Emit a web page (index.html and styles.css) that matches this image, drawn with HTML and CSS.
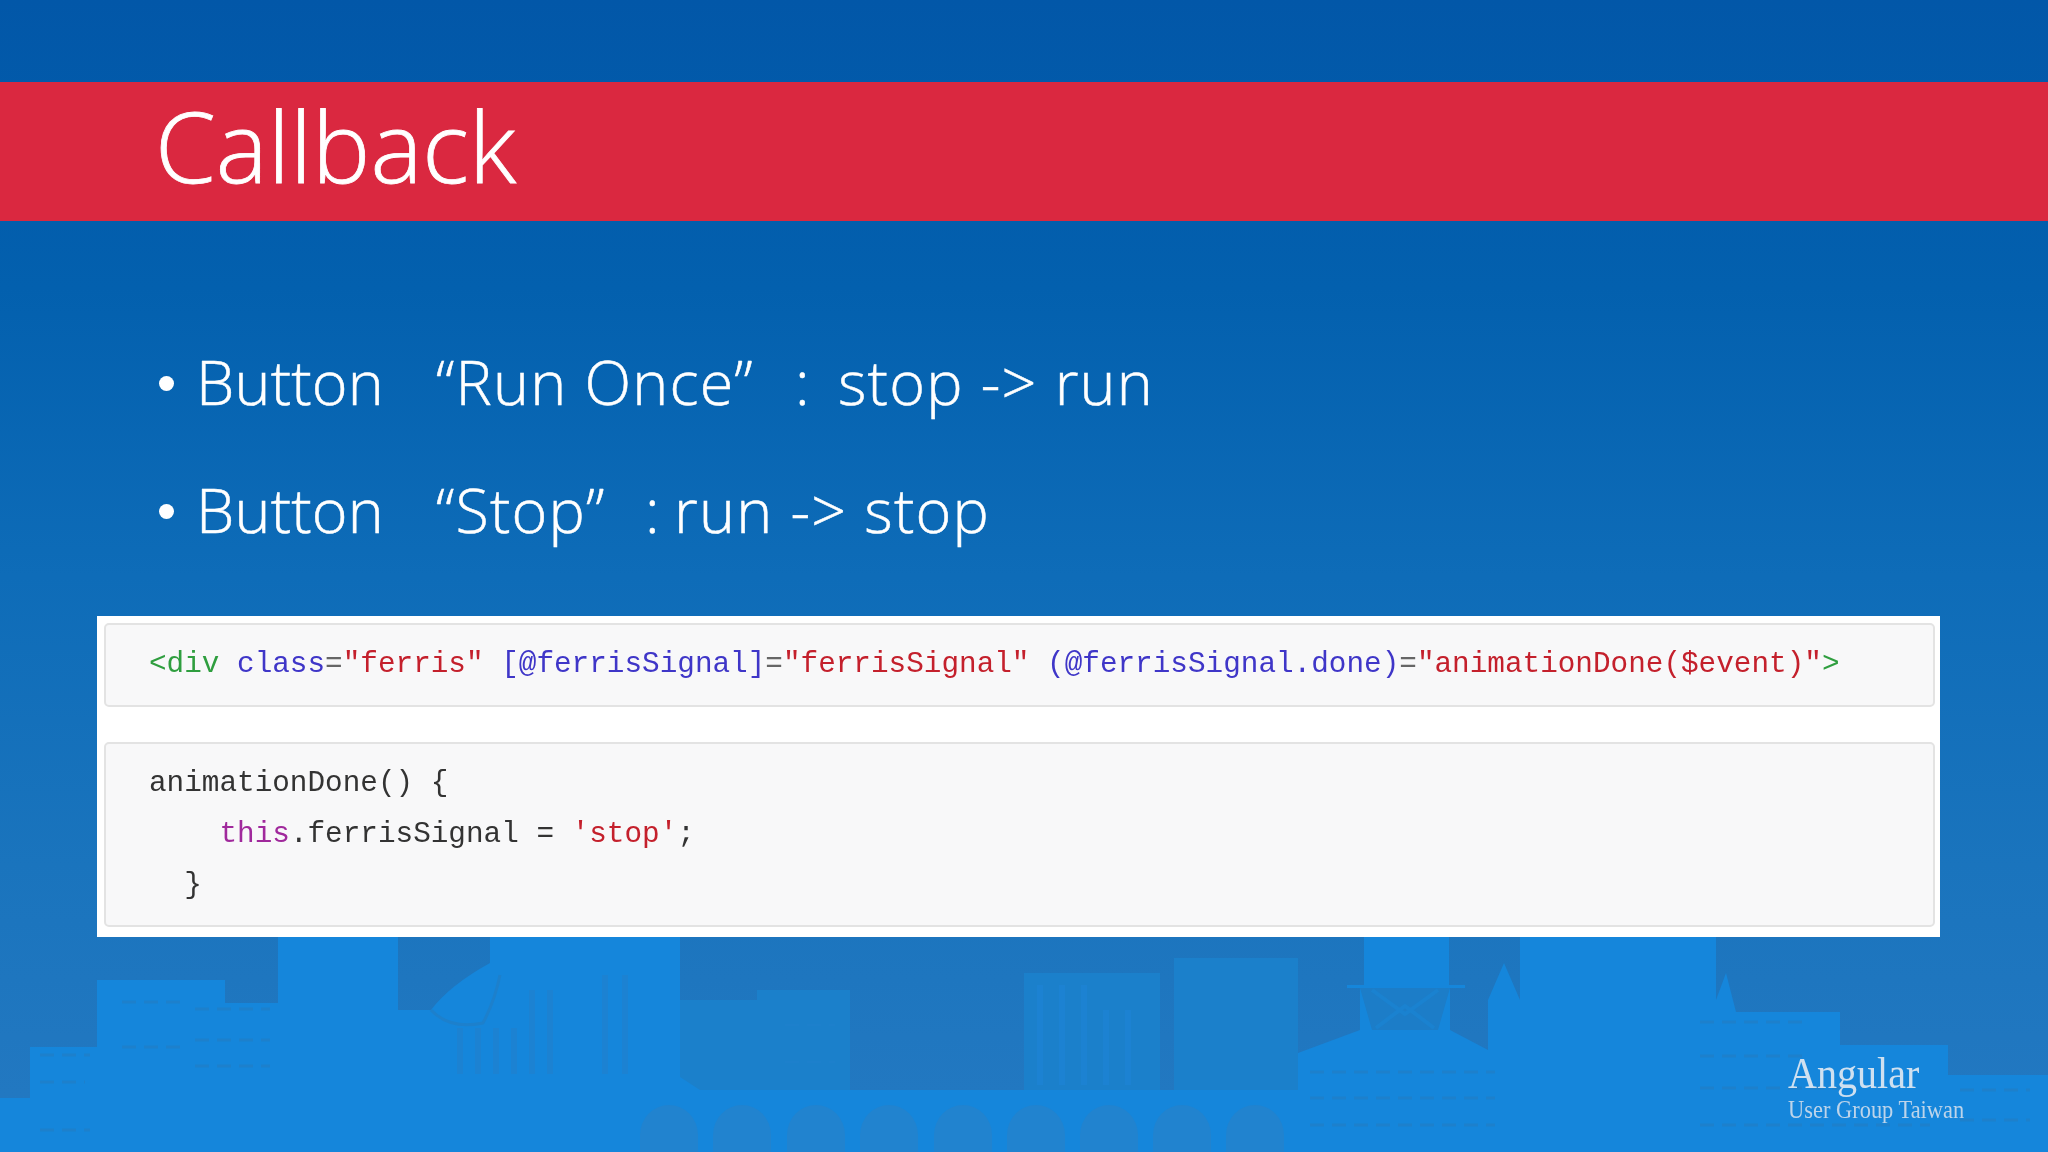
FILE: index.html
```html
<!DOCTYPE html>
<html lang="en">
<head>
<meta charset="utf-8">
<title>Callback</title>
<link rel="stylesheet" href="styles.css">
</head>
<body>
<main class="slide">
  <svg class="skyline" viewBox="0 0 2048 1152" aria-hidden="true">
    <path class="sky-soft" d="M680 1000H757V990H850V1090H680ZM1024 973H1160V1090H1024ZM1174 958H1298V1090H1174Z"/>
    <path class="sky-main" d="M0 1152V1098H30V1047H97V980H225V1003H278V937H398V1010H431Q450 985 490 963V937H680V1077L700 1090H1298V1053L1360 1030V988H1347V985H1364V937H1449V985H1465V988H1450V1030L1488 1050V1000L1504 963 1520 1000V937H1716V1000L1726 973 1736 1012H1840V1045H1948V1075H2048V1152Z"/>
    <path class="sky-roof" d="M1360 988H1450L1438 1030H1372Z"/>
    <path class="sky-cross" d="M1372 990L1405 1014 1438 990M1376 1028L1405 1006 1434 1028"/>
    <path class="sky-dome" d="M431 1010Q450 1030 483 1023Q495 1000 500 975"/>
    <path class="sky-columns" d="M460 1028V1074M478 1028V1074M496 1028V1074M514 1028V1074M532 990V1074M550 990V1074M605 975V1074M625 975V1074M1040 985V1085M1062 985V1085M1084 985V1085M1106 1010V1085M1128 1010V1085"/>
    <g class="sky-arches">
      <path d="M640 1152V1135a29 30 0 0 1 58 0V1152Z"/>
      <path d="M713 1152V1135a29 30 0 0 1 58 0V1152Z"/>
      <path d="M787 1152V1135a29 30 0 0 1 58 0V1152Z"/>
      <path d="M860 1152V1135a29 30 0 0 1 58 0V1152Z"/>
      <path d="M934 1152V1135a29 30 0 0 1 58 0V1152Z"/>
      <path d="M1007 1152V1135a29 30 0 0 1 58 0V1152Z"/>
      <path d="M1080 1152V1135a29 30 0 0 1 58 0V1152Z"/>
      <path d="M1153 1152V1135a29 30 0 0 1 58 0V1152Z"/>
      <path d="M1226 1152V1135a29 30 0 0 1 58 0V1152Z"/>
    </g>
    <g class="sky-windows">
      <path d="M122 1002h60M195 1009h75M122 1047h60M195 1040h75M195 1066h75M40 1055h50M40 1082h45M40 1130h50M785 1025h50M785 1062h50M1310 1072h185M1310 1098h185M1310 1125h185M1700 1022h110M1700 1056h110M1700 1088h140M1700 1125h230M1960 1090h70M1960 1120h70"/>
    </g>
  </svg>

  <header class="band">
    <h1 class="title">Callback</h1>
  </header>

  <ul class="points">
    <li class="point"><span class="w1">Button</span><span class="w2">“Run Once”</span><span class="w3">:</span><span class="w4">stop -&gt; run</span></li>
    <li class="point"><span class="w1">Button</span><span class="w2 w2-short">“Stop”</span><span class="w5">:</span><span class="w4">run -&gt; stop</span></li>
  </ul>

  <section class="panel">
    <pre class="code code-short"><span class="tag">&lt;div</span> <span class="attr">class</span><span class="eq">=</span><span class="str">"ferris"</span> <span class="attr">[@ferrisSignal]</span><span class="eq">=</span><span class="str">"ferrisSignal"</span> <span class="attr">(@ferrisSignal.done)</span><span class="eq">=</span><span class="str">"animationDone($event)"</span><span class="tag">&gt;</span></pre>
    <pre class="code">animationDone() {
    <span class="kw">this</span>.ferrisSignal = <span class="str">'stop'</span>;
  }</pre>
  </section>

  <footer class="brand">
    <div class="brand-main">Angular</div>
    <div class="brand-sub">User Group Taiwan</div>
  </footer>
</main>
</body>
</html>
```
FILE: styles.css
```css
* { box-sizing: border-box; }
html, body { margin: 0; padding: 0; }
body { width: 2048px; height: 1152px; overflow: hidden; }

.slide {
  position: relative;
  width: 2048px;
  height: 1152px;
  padding-top: 82px;
  display: flex;
  flex-direction: column;
  overflow: hidden;
  background: linear-gradient(180deg, #0257a8 0%, #0360ae 25%, #0e6cb8 50%, #1a74bd 75%, #2479c2 100%);
  font-family: "Open Sans", "Noto Sans", sans-serif;
  color: #fff;
}

.skyline { position: absolute; inset: 0; width: 2048px; height: 1152px; }
.sky-main { fill: #1586db; }
.sky-soft { fill: #1b80cb; }
.sky-roof { fill: #1c7dc8; }
.sky-cross { fill: none; stroke: #1a82d0; stroke-width: 4; }
.sky-dome { fill: none; stroke: #1d80cc; stroke-width: 3; }
.sky-columns { fill: none; stroke: #1c82d2; stroke-width: 6; }
.sky-arches { fill: #2183cf; }
.sky-windows { fill: none; stroke: #1d80cc; stroke-width: 3; stroke-dasharray: 14 8; }

.band {
  position: relative;
  height: 139px;
  background: #da2840;
  padding-left: 155px;
}
.title {
  margin: 0;
  font-weight: 300;
  font-size: 98px;
  line-height: 127px;
  -webkit-text-stroke: 0.8px #fff;
}

.points {
  position: relative;
  list-style: none;
  margin: 0;
  padding: 118px 0 0 159px;
  height: 395px;
  display: flex;
  flex-direction: column;
  gap: 43px;
}
.point {
  display: flex;
  align-items: center;
  height: 85px;
  font-weight: 300;
  font-size: 61px;
  line-height: 85px;
  letter-spacing: 1.2px;
  -webkit-text-stroke: 0.5px #fff;
  white-space: pre;
}
.point::before {
  content: "";
  width: 15px;
  height: 15px;
  margin-top: 4px;
  border-radius: 50%;
  background: #fff;
  margin-right: 22px;
}
.w1 { width: 240px; letter-spacing: 0.2px; }
.w2 { width: 359px; }
.w2-short { width: 209px; }
.w3 { width: 43px; }
.w5 { width: 29px; }

.panel {
  position: relative;
  margin-left: 97px;
  width: 1843px;
  height: 321px;
  background: #fff;
  padding: 7px 5px 0 7px;
  display: flex;
  flex-direction: column;
  gap: 35px;
}
.code {
  margin: 0;
  height: 185px;
  padding: 14px 0 0 43px;
  background: #f8f8f9;
  border: 2px solid #e3e3e3;
  border-radius: 5px;
  font-family: "Liberation Mono", "DejaVu Sans Mono", monospace;
  font-size: 29.35px;
  line-height: 51px;
  color: #333;
  filter: blur(0.4px);
}
.code-short { height: 84px; }
.tag { color: #2f9e3f; }
.attr { color: #3f36c8; }
.eq { color: #666; }
.str { color: #c4202c; }
.kw { color: #a0299c; }

.brand {
  position: relative;
  margin-left: 1788px;
  padding-top: 116px;
  font-family: "Liberation Serif", serif;
  white-space: nowrap;
}
.brand-main {
  font-size: 45px;
  line-height: 40px;
  color: #cfe0f0;
  transform: scaleX(0.89);
  transform-origin: left;
}
.brand-sub {
  font-size: 25.5px;
  line-height: 33px;
  color: #bdd4ea;
  transform: scaleX(0.88);
  transform-origin: left;
}
```
